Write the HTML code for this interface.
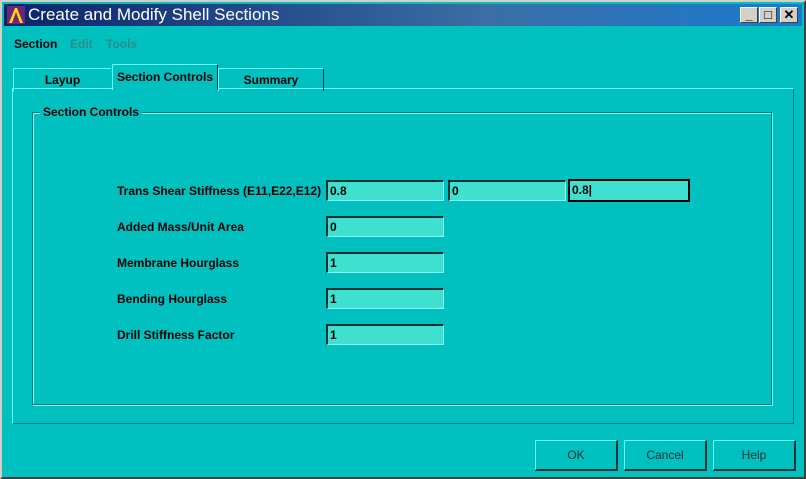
<!DOCTYPE html><html><head><style>
body{margin:0;width:806px;height:479px;overflow:hidden;background:#d4d0c8;font-family:"Liberation Sans",Arial,sans-serif;}
.win{position:absolute;left:0;top:0;width:802px;height:475px;border:2px solid #d4d0c8;border-right-color:#404040;border-bottom-color:#404040;background:#00c0c0;}
.title{position:absolute;left:2px;top:2px;width:798px;height:22px;background:linear-gradient(90deg,#0a246a,#3a6ea5 60%,#1a7ad0);}
.title span{position:absolute;left:24px;top:1px;color:#fff;font-size:17px;}
.logo{position:absolute;left:3px;top:2px;width:18px;height:18px;background:#70237a;}
.tb{position:absolute;top:3px;width:16px;height:14px;background:#d4d0c8;border:1px solid #fff;border-right-color:#404040;border-bottom-color:#404040;font-size:13px;font-weight:bold;text-align:center;line-height:14px;}
.abs{position:absolute;font-size:12px;font-weight:bold;}
.tab{position:absolute;top:67px;height:22px;border-top:1px solid #6ff;border-left:1px solid #6ff;border-right:1px solid #034;font-size:12px;font-weight:bold;text-align:center;line-height:22px;}
.panel{position:absolute;left:12px;top:88px;width:780px;height:334px;border:1px solid #6ff;border-right-color:#077;border-bottom-color:#077;}
.grp{position:absolute;left:32px;top:112px;width:738px;height:291px;border:1px solid #077;box-shadow:1px 1px 0 #6ff, inset 1px 1px 0 #6ff;}
.f{position:absolute;width:113px;height:18px;background:#40e0d0;border-top:2px solid #033;border-left:2px solid #033;border-right:1px solid #8ff;border-bottom:1px solid #8ff;font-size:12px;font-weight:bold;line-height:18px;padding-left:2px;box-sizing:content-box;}
.btn{position:absolute;top:440px;width:80px;height:28px;border:1px solid #6ff;border-right:2px solid #033;border-bottom:2px solid #033;font-size:12px;text-align:center;line-height:28px;color:#033;}
</style></head><body><div class="win">
<div class="title"><div class="logo"><svg width="18" height="18"><path d="M2 17 L8 2 L10 2 L16 17 L13 17 L9 6 L5 17Z" fill="#ffd800"/></svg></div><span>Create and Modify Shell Sections</span>
<div class="tb" style="left:736px">_</div><div class="tb" style="left:755px">□</div><div class="tb" style="left:776px">✕</div></div>
</div>
<div class="abs" style="left:14px;top:37px">Section</div>
<div class="abs" style="left:70px;top:37px;color:#2a8c8c">Edit</div>
<div class="abs" style="left:106px;top:37px;color:#2a8c8c">Tools</div>
<div class="panel"></div>
<div class="tab" style="left:13px;width:97px;border-right:none;top:68px">Layup</div>
<div class="tab" style="left:112px;width:104px;top:64px;height:25px;line-height:25px;background:#00c0c0">Section Controls</div>
<div class="tab" style="left:218px;width:104px;top:68px">Summary</div>
<div class="grp"></div>
<div class="abs" style="left:40px;top:105px;background:#00c0c0;padding:0 3px">Section Controls</div>
<div class="abs" style="left:117px;top:184px">Trans Shear Stiffness (E11,E22,E12)</div>
<div class="abs" style="left:117px;top:220px">Added Mass/Unit Area</div>
<div class="abs" style="left:117px;top:256px">Membrane Hourglass</div>
<div class="abs" style="left:117px;top:292px">Bending Hourglass</div>
<div class="abs" style="left:117px;top:328px">Drill Stiffness Factor</div>
<div class="f" style="left:326px;top:180px">0.8</div>
<div class="f" style="left:448px;top:180px">0</div>
<div class="f" style="left:568px;top:179px;width:116px;height:19px;border:2px solid #000;">0.8|</div>
<div class="f" style="left:326px;top:216px">0</div>
<div class="f" style="left:326px;top:252px">1</div>
<div class="f" style="left:326px;top:288px">1</div>
<div class="f" style="left:326px;top:324px">1</div>
<div class="btn" style="left:535px">OK</div>
<div class="btn" style="left:624px">Cancel</div>
<div class="btn" style="left:713px">Help</div>
</body></html>
